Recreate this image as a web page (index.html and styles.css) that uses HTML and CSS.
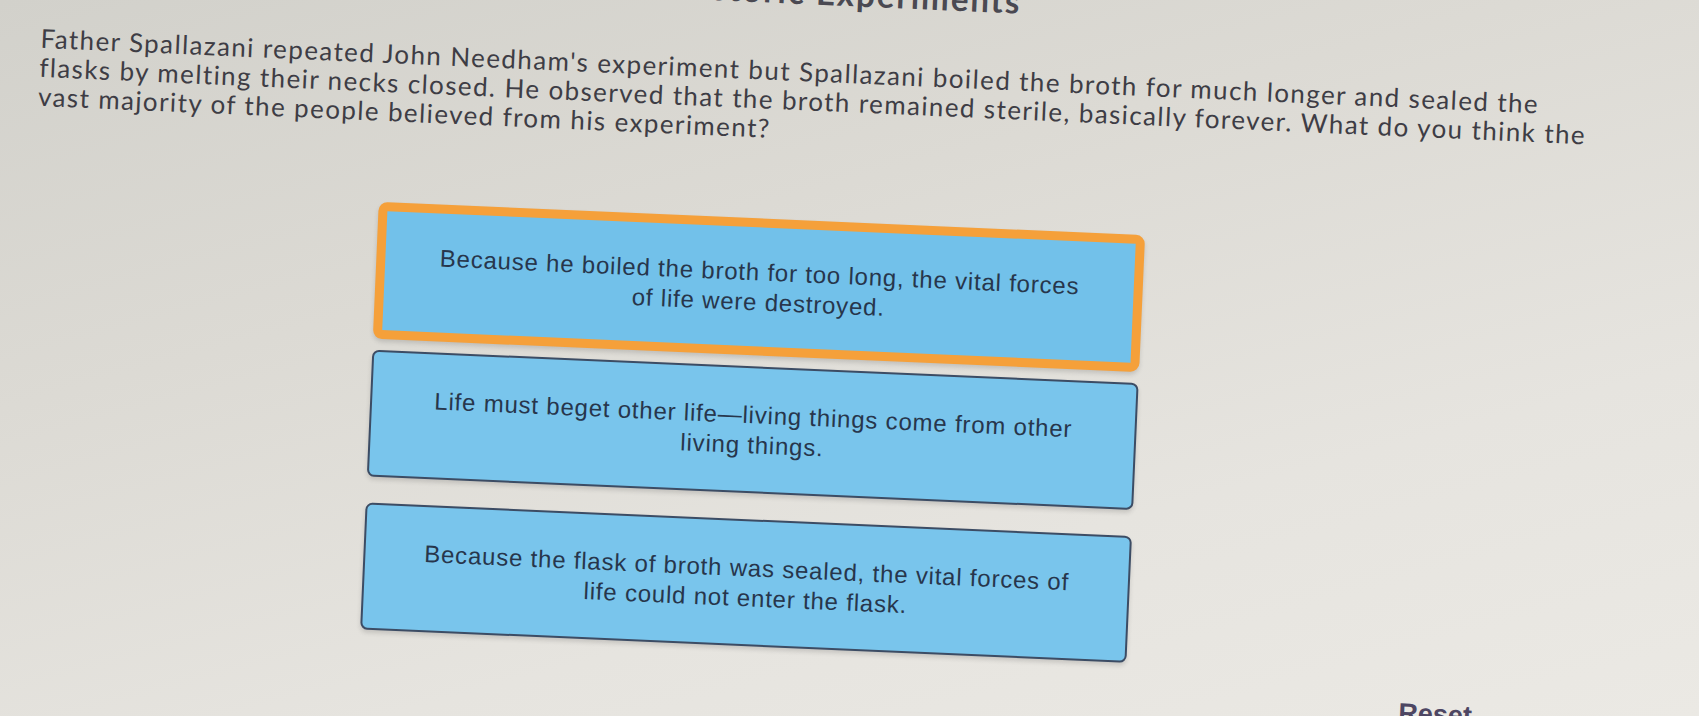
FILE: index.html
```html
<!DOCTYPE html>
<html lang="en">
<head>
  <meta charset="UTF-8">
  <meta name="viewport" content="width=device-width, initial-scale=1.0">
  <title>Historic Experiments</title>
  <link rel="stylesheet" href="styles.css">
</head>
<body>
<div class="page">
  <h1 class="lesson-title">Historic Experiments</h1>

  <!-- Domanda -->
  <p class="question">
    Father Spallazani repeated John Needham's experiment but Spallazani boiled the broth for much longer and sealed the<br>
    flasks by melting their necks closed. He observed that the broth remained sterile, basically forever. What do you think the<br>
    vast majority of the people believed from his experiment?
  </p>

  <!-- Risposte -->
  <div class="answers">
    <div class="answer selected" onclick="selectAnswer(this)">
      <span>Because he boiled the broth for too long, the vital forces<br>of life were destroyed.</span>
    </div>
    <div class="answer" onclick="selectAnswer(this)">
      <span>Life must beget other life&mdash;living things come from other<br>living things.</span>
    </div>
    <div class="answer" onclick="selectAnswer(this)">
      <span>Because the flask of broth was sealed, the vital forces of<br>life could not enter the flask.</span>
    </div>
  </div>

  <div class="actions">
    <button class="reset-button" onclick="resetAnswers()">Reset</button>
  </div>
</div>

<script>
  // Una sola risposta selezionata alla volta
  function selectAnswer(item) {
    resetAnswers();
    item.classList.add('selected');
  }

  function resetAnswers() {
    document.querySelectorAll('.answer.selected').forEach(a => a.classList.remove('selected'));
  }
</script>
</body>
</html>
```

FILE: styles.css
```css
html, body {
  height: 100%;
}
body {
  margin: 0;
  overflow: hidden;
  background: linear-gradient(165deg, #d2d1cb 0%, #dcdad4 35%, #e6e4df 70%, #ebe9e4 100%);
}
/* Pagina leggermente inclinata */
.page {
  width: 1700px;
  padding-left: 45px;
  box-sizing: border-box;
  transform: rotate(2.5deg);
  transform-origin: 0 0;
}
.lesson-title {
  margin: -63px 0 0 631px;
  font-family: Lato, "Open Sans", sans-serif;
  font-weight: 700;
  font-size: 33px;
  line-height: 38px;
  letter-spacing: 2px;
  color: #4a4952;
}
.question {
  margin: 47px 0 0 0;
  width: 1640px;
  font-family: Lato, "Open Sans", sans-serif;
  font-size: 26px;
  line-height: 29px;
  letter-spacing: 1.4px;
  color: #3e3d45;
}
/* Colonna delle risposte */
.answers {
  display: flex;
  flex-direction: column;
  gap: 26px;
  width: 767px;
  margin: 76px 0 0 345px;
}
.answer {
  height: 127px;
  box-sizing: border-box;
  display: flex;
  align-items: center;
  justify-content: center;
  text-align: center;
  background-color: #79c5ec;
  border: 2px solid #3c4c64;
  border-radius: 7px;
  box-shadow: 0 3px 4px rgba(60, 60, 60, 0.18);
  font-family: "Liberation Sans", Arial, sans-serif;
  font-size: 24px;
  line-height: 30px;
  letter-spacing: 0.8px;
  color: #27364c;
  cursor: pointer;
}
.answer.selected {
  height: 137px;
  margin-bottom: -15px;
  border: 9px solid #f5a03a;
  border-radius: 9px;
  background-color: #72c1ea;
}
.actions {
  margin: 22px 0 0 1386px;
}
.reset-button {
  padding: 0;
  border: none;
  background: none;
  font-family: "Liberation Sans", Arial, sans-serif;
  font-weight: 700;
  font-size: 27px;
  line-height: 32px;
  color: #4d4662;
  cursor: pointer;
}
```
